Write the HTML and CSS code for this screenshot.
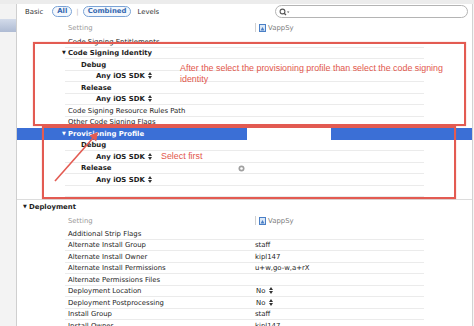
FILE: index.html
```html
<!DOCTYPE html>
<html lang="en">
<head>
<meta charset="UTF-8">
<title>Build Settings</title>
<link rel="stylesheet" href="styles.css">
</head>
<body>
<div class="window">
    <aside class="sidebar"><div class="sidebar-sel"></div></aside>

    <main class="editor">
        <div class="filterbar">
            <span class="tab">Basic</span>
            <span class="pill">All</span>
            <span class="bar">|</span>
            <span class="pill">Combined</span>
            <span class="tab levels">Levels</span>
            <div class="search">
                <svg width="11" height="8" viewBox="0 0 11 8"><circle cx="3.5" cy="3.5" r="2.4" fill="none" stroke="#555" stroke-width="1.1"/><line x1="5.2" y1="5.2" x2="7" y2="7" stroke="#555" stroke-width="1.3"/><path d="M8 3.5h2.4L9.2 5z" fill="#555"/></svg>
            </div>
        </div>

        <div class="colhead">
            <span class="name">Setting</span>
            <span class="target"><i class="sep"></i><svg width="7" height="8" viewBox="0 0 7 8"><rect x="0.5" y="0.5" width="6" height="7" fill="#dbe8f7" stroke="#4a7fc6"/><path d="M1.5 6.5l2-3.5 2 3.5z" fill="#4a7fc6"/></svg>VappSy</span>
        </div>

        <div class="row"><span class="name">Code Signing Entitlements</span></div>
        <div class="row"><span class="name group"><b class="tri">▼</b>Code Signing Identity</span></div>
        <div class="row"><span class="name lvl1">Debug</span></div>
        <div class="row"><span class="name lvl2">Any iOS SDK <svg class="ud" width="4" height="7" viewBox="0 0 4 7"><path d="M0 3L2 0l2 3zM0 4l2 3 2-3z" fill="#333"/></svg></span></div>
        <div class="row"><span class="name lvl1">Release</span></div>
        <div class="row"><span class="name lvl2">Any iOS SDK <svg class="ud" width="4" height="7" viewBox="0 0 4 7"><path d="M0 3L2 0l2 3zM0 4l2 3 2-3z" fill="#333"/></svg></span></div>
        <div class="row"><span class="name plain">Code Signing Resource Rules Path</span></div>
        <div class="row"><span class="name plain">Other Code Signing Flags</span></div>
        <div class="row selected"><span class="name group"><b class="tri">▼</b>Provisioning Profile</span></div>
        <div class="row"><span class="name lvl1">Debug</span></div>
        <div class="row"><span class="name lvl2">Any iOS SDK <svg class="ud" width="4" height="7" viewBox="0 0 4 7"><path d="M0 3L2 0l2 3zM0 4l2 3 2-3z" fill="#333"/></svg></span></div>
        <div class="row"><span class="name lvl1">Release</span><span class="value"><svg class="plus" width="7" height="7" viewBox="0 0 7 7"><circle cx="3.5" cy="3.5" r="3" fill="#a0a0a0"/><circle cx="3.5" cy="3.5" r="1.3" fill="#fff"/></svg></span></div>
        <div class="row"><span class="name lvl2">Any iOS SDK <svg class="ud" width="4" height="7" viewBox="0 0 4 7"><path d="M0 3L2 0l2 3zM0 4l2 3 2-3z" fill="#333"/></svg></span></div>
        <div class="row"></div>

        <div class="section">
            <div class="sechead"><b class="tri">▼</b>Deployment</div>
            <div class="colhead tall">
                <span class="name">Setting</span>
                <span class="target"><i class="sep"></i><svg width="7" height="8" viewBox="0 0 7 8"><rect x="0.5" y="0.5" width="6" height="7" fill="#dbe8f7" stroke="#4a7fc6"/><path d="M1.5 6.5l2-3.5 2 3.5z" fill="#4a7fc6"/></svg>VappSy</span>
            </div>
            <div class="row"><span class="name plain">Additional Strip Flags</span></div>
            <div class="row"><span class="name plain">Alternate Install Group</span><span class="value">staff</span></div>
            <div class="row"><span class="name plain">Alternate Install Owner</span><span class="value">kipl147</span></div>
            <div class="row"><span class="name plain">Alternate Install Permissions</span><span class="value">u+w,go-w,a+rX</span></div>
            <div class="row"><span class="name plain">Alternate Permissions Files</span></div>
            <div class="row"><span class="name plain">Deployment Location</span><span class="value pop">No <svg class="ud" width="4" height="7" viewBox="0 0 4 7"><path d="M0 3L2 0l2 3zM0 4l2 3 2-3z" fill="#333"/></svg></span></div>
            <div class="row"><span class="name plain">Deployment Postprocessing</span><span class="value pop">No <svg class="ud" width="4" height="7" viewBox="0 0 4 7"><path d="M0 3L2 0l2 3zM0 4l2 3 2-3z" fill="#333"/></svg></span></div>
            <div class="row"><span class="name plain">Install Group</span><span class="value">staff</span></div>
            <div class="row"><span class="name plain">Install Owner</span><span class="value">kipl147</span></div>
        </div>
    </main>

    <div class="scroller"></div>

    <!-- annotations drawn over the screenshot -->
    <div class="mark mark-identity"></div>
    <div class="mark mark-profile"></div>
    <p class="note note-identity">After the select the provisioning profile than select the code signing<br>identity</p>
    <p class="note note-profile">Select first</p>
    <svg class="arrow" width="474" height="326" viewBox="0 0 474 326">
        <line x1="55" y1="181" x2="93" y2="138" stroke="#e35b52" stroke-width="1.6"/>
        <path d="M98 132l-1.8 9.5-6.8-6z" fill="#e35b52"/>
    </svg>
</div>
</body>
</html>
```

FILE: styles.css
```css
body {
    margin: 0;
    padding: 0;
    background-color: #fff;
    font-family: "DejaVu Sans", Verdana, sans-serif;
    font-size: 6.9px;
    color: #1c1c1c;
}

.window {
    position: relative;
    display: flex;
    width: 474px;
    height: 326px;
    overflow: hidden;
    border-top: 4px solid #ececec;
    box-sizing: border-box;
}

.sidebar {
    width: 16px;
    flex: none;
    background-color: #f3f3f3;
    border-right: 1px solid #cfcfcf;
}

.sidebar-sel {
    margin-top: 15px;
    height: 13px;
    background: linear-gradient(#d3dbea, #aebbd3);
}

.editor {
    width: 455px;
    flex: none;
}

.scroller {
    flex: 1;
    background-color: #f6f6f6;
    border-left: 1px solid #d2d2d2;
}

.filterbar {
    display: flex;
    align-items: center;
    height: 15px;
    padding-left: 8px;
    padding-right: 4px;
}

.tab {
    color: #333;
}

.levels {
    margin-left: 6px;
}

.pill {
    padding: 0 4px;
    height: 9px;
    line-height: 9px;
    border: 1px solid #7aa3d6;
    border-radius: 6px;
    color: #3567b0;
    font-weight: bold;
    background-color: #f4f8fd;
}

.tab + .pill {
    margin-left: 9px;
}

.bar {
    color: #b8b8b8;
    margin: 0 4px;
}

.search {
    margin-left: auto;
    width: 193px;
    height: 13px;
    border: 1px solid #b4b4b4;
    border-radius: 7px;
    display: flex;
    align-items: center;
    padding-left: 3px;
    box-sizing: border-box;
}

.colhead {
    display: grid;
    grid-template-columns: 238px 1fr;
    align-items: center;
    height: 17px;
    color: #9a9a9a;
}

.colhead.tall {
    height: 15px;
}

.colhead .name {
    padding-left: 51px;
}

.target {
    display: flex;
    align-items: center;
    gap: 2px;
    color: #7b7b7b;
}

.sep {
    width: 1px;
    height: 9px;
    background-color: #d0d0d0;
    margin-right: 1px;
}

.row {
    display: grid;
    grid-template-columns: 238px 1fr;
    align-items: center;
    height: 11.5px;
    background: linear-gradient(#ebebeb, #ebebeb) no-repeat 48px 100% / 359px 1px;
}

.name {
    padding-left: 51px;
    white-space: nowrap;
}

.name.plain {
    color: #1c1c1c;
}

.name.group {
    padding-left: 45px;
    font-weight: bold;
}

.name.lvl1 {
    padding-left: 64px;
    font-weight: bold;
}

.name.lvl2 {
    padding-left: 79px;
    font-weight: bold;
}

.tri {
    font-size: 5px;
    display: inline-block;
    width: 6px;
    vertical-align: 1px;
}

.ud {
    vertical-align: -1px;
    margin-left: 1px;
}

.value {
    white-space: nowrap;
}

.value.pop {
    padding-left: 1px;
}

.plus {
    margin-left: -17px;
    display: block;
}

.row.selected {
    background: linear-gradient(to right, #3b6fd6 230px, #fff 230px, #fff 314px, #3b6fd6 314px);
    color: #fff;
}

.section {
    margin-top: 2px;
    border-top: 1px solid #dcdcdc;
}

.sechead {
    height: 13px;
    line-height: 13px;
    padding-left: 6px;
    font-weight: bold;
}

.mark {
    position: absolute;
    border: 2px solid #e35b52;
    box-shadow: 0 0 1px rgba(227, 91, 82, 0.6);
}

.mark-identity {
    left: 33px;
    top: 38px;
    width: 429px;
    height: 80px;
}

.mark-profile {
    left: 42px;
    top: 122px;
    width: 410px;
    height: 69px;
}

.note {
    position: absolute;
    margin: 0;
    font-family: "Liberation Sans", Arial, sans-serif;
    font-size: 8.9px;
    line-height: 11px;
    color: #e2574c;
}

.note-identity {
    left: 180px;
    top: 59px;
}

.note-profile {
    left: 161px;
    top: 147px;
}

.arrow {
    position: absolute;
    left: 0;
    top: -4px;
}
```
